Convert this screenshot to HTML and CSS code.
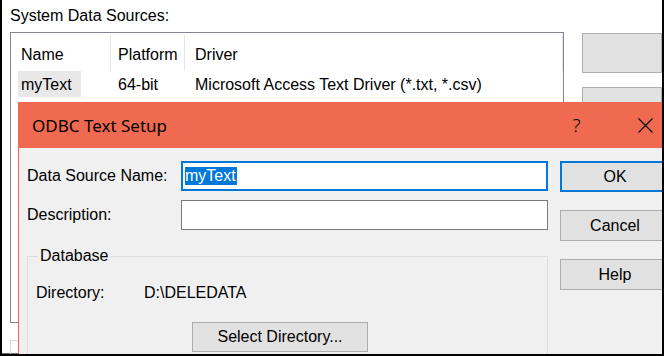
FILE: index.html
```html
<!DOCTYPE html>
<html lang="en">
<head>
    <meta charset="UTF-8">
    <title>ODBC Text Setup</title>
    <link rel="stylesheet" href="styles.css">
</head>
<body>
    <div class="screen">
        <div class="admin">
            <div class="admin-label">System Data Sources:</div>
            <div class="admin-main">
                <div class="source-list">
                    <div class="list-head">
                        <div class="head-col head-name">Name</div>
                        <div class="head-col head-platform">Platform</div>
                        <div class="head-col head-driver">Driver</div>
                    </div>
                    <div class="list-row">
                        <div class="cell cell-name"><span class="row-sel">myText</span></div>
                        <div class="cell cell-platform">64-bit</div>
                        <div class="cell cell-driver">Microsoft Access Text Driver (*.txt, *.csv)</div>
                    </div>
                </div>
                <div class="admin-buttons">
                    <div class="win-btn admin-btn"></div>
                    <div class="win-btn admin-btn"></div>
                </div>
            </div>
            <div class="admin-lower"></div>
        </div>

        <div class="dialog">
            <div class="title-bar">
                <span class="title-text">ODBC Text Setup</span>
                <span class="caption-btn caption-help">?</span>
                <span class="caption-btn caption-close">
                    <svg width="15" height="15" viewBox="0 0 15 15">
                        <path d="M0.5 0.5L14.5 14.5M14.5 0.5L0.5 14.5" stroke="#000" stroke-width="1.1" fill="none"></path>
                    </svg>
                </span>
            </div>
            <div class="dialog-body">
                <div class="form-col">
                    <div class="form-row">
                        <label class="form-label">Data Source Name:</label>
                        <div class="text-box focused"><span class="text-sel">myText</span></div>
                    </div>
                    <div class="form-row second">
                        <label class="form-label">Description:</label>
                        <div class="text-box"></div>
                    </div>
                    <fieldset class="group">
                        <legend class="group-title">Database</legend>
                        <div class="dir-row">
                            <span class="dir-label">Directory:</span>
                            <span class="dir-value">D:\DELEDATA</span>
                        </div>
                        <div class="win-btn select-btn">Select Directory...</div>
                    </fieldset>
                </div>
                <div class="button-col">
                    <div class="win-btn dlg-btn default">OK</div>
                    <div class="win-btn dlg-btn">Cancel</div>
                    <div class="win-btn dlg-btn">Help</div>
                </div>
            </div>
        </div>
    </div>
</body>
</html>
```

FILE: styles.css
```css
* {
    margin: 0;
    padding: 0;
    box-sizing: border-box;
}

body {
    font-family: 'Liberation Sans', Arial, sans-serif;
    font-size: 16px;
    color: #000;
    background: #000;
}

.screen {
    position: relative;
    width: 664px;
    height: 356px;
    overflow: hidden;
    background: #fff;
    border-left: 2px solid #000;
    border-right: 2px solid #000;
    border-bottom: 2px solid #000;
    box-shadow: inset 0 -1px 0 #6b6b6b;
}

/* parent window */

.admin {
    padding: 7px 0 0 8px;
}

.admin-label {
    line-height: 18px;
}

.admin-main {
    display: flex;
    gap: 18px;
    margin-top: 7px;
}

.source-list {
    width: 595px;
    height: 291px;
    border: 1px solid #828790;
    background: #fff;
}

.list-head {
    display: flex;
    height: 38px;
    padding-top: 2px;
}

.head-col {
    display: flex;
    align-items: center;
    padding-top: 3px;
    border-right: 1px solid #e5e5e5;
}

.head-name {
    width: 100px;
    padding-left: 10px;
}

.head-platform {
    width: 74px;
    padding-left: 7px;
}

.head-driver {
    flex: 1;
    padding-left: 10px;
}

.list-row {
    display: flex;
    height: 26px;
    line-height: 24px;
}

.cell {
    padding-top: 2px;
}

.cell-name {
    width: 100px;
    padding-top: 0;
    padding-left: 7px;
}

.row-sel {
    display: inline-block;
    width: 63px;
    height: 26px;
    padding: 2px 0 0 3px;
    background: #e8e8e8;
}

.cell-platform {
    width: 74px;
    padding-left: 7px;
}

.cell-driver {
    padding-left: 10px;
}

.admin-buttons {
    display: flex;
    flex-direction: column;
    gap: 14px;
    padding-top: 1px;
}

.win-btn {
    display: flex;
    align-items: center;
    justify-content: center;
    background: #e1e1e1;
    border: 1px solid #adadad;
}

.admin-btn {
    width: 80px;
    height: 40px;
}

.admin-lower {
    width: 200px;
    height: 40px;
    margin-top: 17px;
    border: 1px solid #d9d9d9;
}

/* dialog */

.dialog {
    position: absolute;
    left: 16px;
    top: 102px;
    width: 662px;
    height: 300px;
    background: #f0f0f0;
    border-left: 1px solid #ef6a51;
}

.title-bar {
    display: flex;
    align-items: center;
    height: 46px;
    background: #ef6a51;
}

.title-text {
    flex: 1;
    padding-left: 13px;
    padding-top: 1px;
    font-family: 'Noto Sans', sans-serif;
    font-size: 17px;
}

.caption-btn {
    display: flex;
    align-items: center;
    justify-content: center;
    width: 69px;
    height: 46px;
}

.caption-help {
    font-family: 'Noto Sans', sans-serif;
    font-size: 19px;
    font-weight: 300;
}

.dialog-body {
    display: flex;
    padding: 13px 0 0 8px;
}

.form-col {
    width: 521px;
}

.form-row {
    display: flex;
    align-items: center;
    height: 30px;
}

.form-row.second {
    margin-top: 9px;
}

.form-label {
    width: 154px;
}

.text-box {
    width: 367px;
    height: 30px;
    background: #fff;
    border: 1px solid #7a7a7a;
    padding-left: 3px;
    display: flex;
    align-items: center;
}

.text-box.focused {
    border: 2px solid #0078d7;
    padding-left: 2px;
}

.text-sel {
    background: #0078d7;
    color: #fff;
    line-height: 18px;
    padding-right: 1px;
}

.group {
    margin-top: 17px;
    height: 140px;
    border: 1px solid #dcdcdc;
    padding: 0 8px;
}

.group-title {
    margin-left: 2px;
    padding: 0 2px;
    line-height: 18px;
}

.dir-row {
    display: flex;
    margin-top: 19px;
    line-height: 18px;
}

.dir-label {
    width: 108px;
}

.select-btn {
    width: 176px;
    height: 30px;
    margin: 20px 0 0 156px;
}

.button-col {
    display: flex;
    flex-direction: column;
    gap: 18px;
    margin-left: 12px;
}

.dlg-btn {
    width: 110px;
    height: 31px;
}

.dlg-btn.default {
    border: 2px solid #0078d7;
}
```
